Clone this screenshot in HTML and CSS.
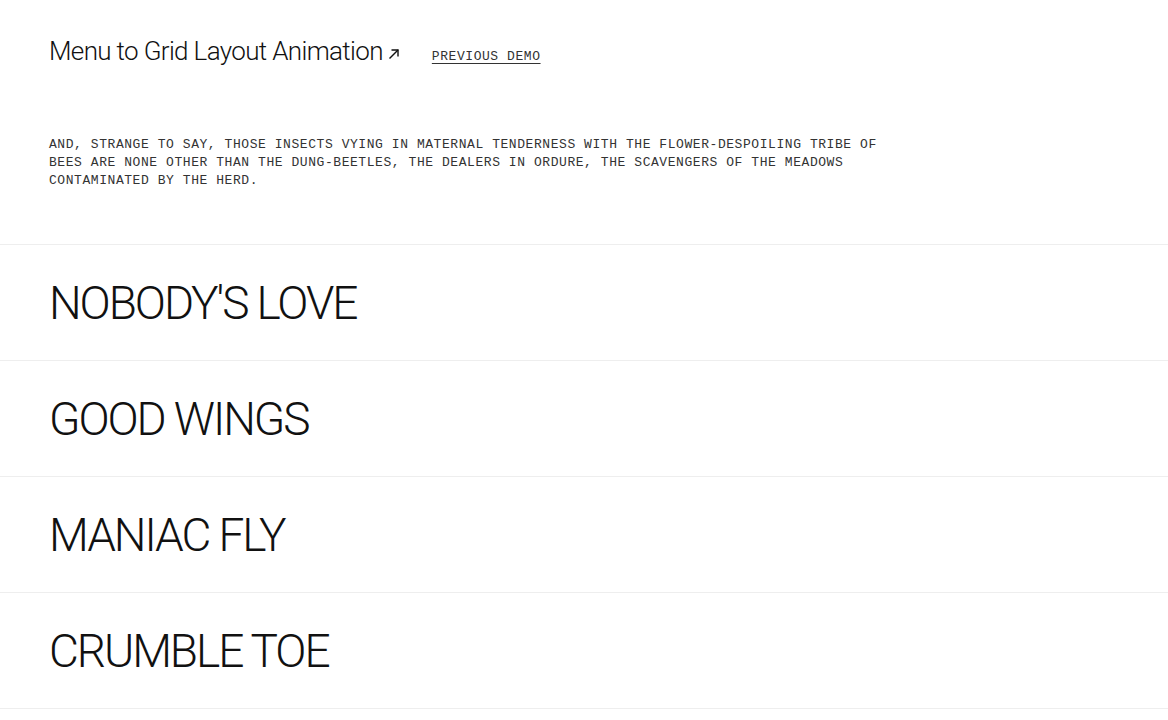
FILE: index.html
```html
<!DOCTYPE html>
<html lang="en">
<head>
    <meta charset="UTF-8">
    <meta name="viewport" content="width=device-width, initial-scale=1.0">
    <title>Menu to Grid Layout Animation</title>
    <link rel="stylesheet" href="styles.css">
</head>
<body>
    <header class="frame">
        <div class="frame-title">
            <h1>Menu to Grid Layout Animation</h1>
            <a href="#" class="frame-arrow" aria-label="Read the article">
                <svg width="12" height="12" viewBox="0 0 12 12" fill="none" stroke="currentColor" stroke-width="1.4">
                    <path d="M1.5 10.5 L10 2"/>
                    <path d="M3.5 2 H10 V8.5"/>
                </svg>
            </a>
        </div>
        <a href="#" class="frame-link">Previous demo</a>
    </header>

    <p class="intro">And, strange to say, those insects vying in maternal tenderness with the flower-despoiling tribe of bees are none other than the dung-beetles, the dealers in ordure, the scavengers of the meadows contaminated by the herd.</p>

    <nav class="menu">
        <a href="#" class="menu-item">Nobody's Love</a>
        <a href="#" class="menu-item">Good Wings</a>
        <a href="#" class="menu-item">Maniac Fly</a>
        <a href="#" class="menu-item">Crumble Toe</a>
    </nav>
</body>
</html>
```

FILE: styles.css
```css
body {
    margin: 0;
    background-color: #fff;
    color: #111;
    font-family: Roboto, "Liberation Sans", sans-serif;
}
a {
    color: inherit;
    text-decoration: none;
}
.frame {
    display: flex;
    align-items: baseline;
    gap: 32px;
    padding: 36px 49px 0;
}
.frame-title {
    display: flex;
    align-items: baseline;
    gap: 5px;
}
.frame-title h1 {
    margin: 0;
    font-size: 26px;
    font-weight: 300;
    letter-spacing: -0.025em;
}
.frame-arrow svg {
    display: block;
}
.frame-link,
.intro {
    font-family: "Liberation Mono", "DejaVu Sans Mono", monospace;
    font-size: 13px;
    letter-spacing: 0.56px;
    text-transform: uppercase;
    color: #333;
}
.frame-link {
    text-decoration: underline;
    text-underline-offset: 3px;
}
.intro {
    width: 850px;
    margin: 70px 49px 54px;
    line-height: 18px;
}
.menu {
    display: flex;
    flex-direction: column;
}
.menu-item {
    display: flex;
    align-items: center;
    height: 115px;
    padding: 0 49px;
    border-top: 1px solid #eeeeee;
    font-size: 46px;
    font-weight: 300;
    letter-spacing: -0.045em;
    text-transform: uppercase;
}
.menu-item:last-child {
    border-bottom: 1px solid #eeeeee;
}
```
